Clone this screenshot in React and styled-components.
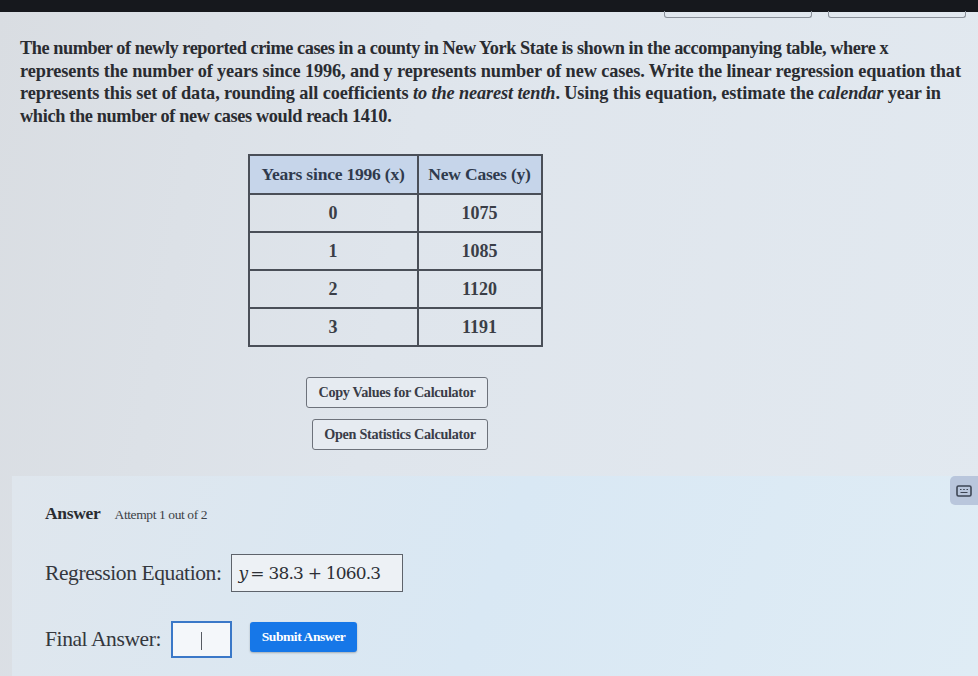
import React from 'react'
import styled, { createGlobalStyle } from 'styled-components'

const Global = createGlobalStyle`
  html, body { margin: 0; padding: 0; }
  body {
    width: 978px;
    height: 676px;
    overflow: hidden;
    background: linear-gradient(100deg, #d9dde2 0%, #dfe5ec 40%, #e2e9f0 100%);
    font-family: "Liberation Serif", "DejaVu Serif", serif;
    color: #23262b;
  }
`

const Page = styled.div`
  width: 978px;
  height: 676px;
  display: flex;
  flex-direction: column;
`

const TopBar = styled.div`
  height: 12px;
  background: #16181d;
  display: flex;
  justify-content: flex-end;
  align-items: flex-end;
  gap: 16px;
  padding-right: 12px;
`

const Tab = styled.div`
  width: ${p => p.w}px;
  height: 6px;
  margin-bottom: -6px;
  border: 1px solid #8a9099;
  border-top: none;
  border-radius: 0 0 3px 3px;
`

const Question = styled.div`
  margin: 25px 0 0 20px;
  width: 950px;
  font-size: 18.3px;
  line-height: 22.6px;
  font-weight: 700;
  letter-spacing: -0.35px;
  color: #2a2c31;
  em { font-weight: 700; }
`

const Line = styled.div`
  white-space: nowrap;
  letter-spacing: ${p => p.ls || -0.35}px;
`

const Center = styled.div`
  margin: 27px 0 0 247px;
  width: 296px;
  display: flex;
  flex-direction: column;
  align-items: center;
`

const Table = styled.table`
  border-collapse: collapse;
  width: 295px;
  font-family: "Liberation Serif", "DejaVu Serif", serif;
  color: #3a3d44;
`

const Th = styled.th`
  background: #c6d5ea;
  border: 2px solid #4a4f58;
  height: 37px;
  padding: 0 4px;
  font-size: 17.5px;
  font-weight: 700;
  letter-spacing: -0.2px;
  white-space: nowrap;
  color: #2f3a4d;
`

const Td = styled.td`
  border: 2px solid #4a4f58;
  height: 34px;
  text-align: center;
  font-size: 18px;
  font-weight: 700;
  color: #3a3e47;
`

const ToolButton = styled.button`
  font-family: "Liberation Serif", serif;
  font-weight: 700;
  font-size: 14.2px;
  letter-spacing: -0.3px;
  color: #3a3d48;
  background: #e6ebf1;
  border: 1.5px solid #6d727b;
  border-radius: 3px;
  height: 31px;
  padding: 0 11px;
  margin-top: ${p => p.top}px;
  margin-left: ${p => p.shift || 0}px;
`

const AnswerPanel = styled.div`
  margin: 26px 0 0 12px;
  flex: 1;
  background: linear-gradient(110deg, #dfe6ed 0%, #d9e8f4 50%, #dfecf5 100%);
  padding: 0 0 0 33px;
  display: flex;
  flex-direction: column;
`

const AnswerHead = styled.div`
  display: flex;
  align-items: baseline;
  justify-content: space-between;
`

const Title = styled.div`
  margin-top: 27px;
  display: flex;
  align-items: baseline;
  gap: 14px;
`

const AnswerLabel = styled.span`
  font-weight: 700;
  font-size: 17.5px;
  letter-spacing: -0.3px;
  color: #2a2c31;
`

const Attempt = styled.span`
  font-size: 13.5px;
  letter-spacing: -0.4px;
  color: #3c3f46;
`

const KeyButton = styled.div`
  align-self: flex-start;
  margin-top: 0;
  width: 28px;
  height: 29px;
  border-radius: 5px 0 0 5px;
  background: #b9c6dc;
  display: flex;
  align-items: center;
  justify-content: center;
`

const Row = styled.div`
  display: flex;
  align-items: center;
  margin-top: ${p => p.top}px;
`

const Label = styled.span`
  font-size: 21.5px;
  letter-spacing: -0.4px;
  color: #34373d;
  margin-right: ${p => p.gap}px;
`

const EqBox = styled.div`
  width: 172px;
  height: 38px;
  border: 1.5px solid #5e636b;
  background: #edf1f5;
  display: flex;
  align-items: center;
  padding-left: 7px;
  box-sizing: border-box;
  font-family: "DejaVu Serif", serif;
  font-size: 17px;
  letter-spacing: -0.8px;
  color: #2c2f35;
  i { margin-right: 3px; }
`

const AnswerInput = styled.div`
  width: 61px;
  height: 37px;
  box-sizing: border-box;
  border: 2px solid #3a78c8;
  background: #f4f7fa;
  position: relative;
`

const Caret = styled.div`
  position: absolute;
  left: 28px;
  top: 9px;
  width: 1px;
  height: 18px;
  background: #555a62;
`

const Submit = styled.button`
  margin-left: 18px;
  margin-top: -6px;
  height: 30px;
  width: 107px;
  border: none;
  border-radius: 3px;
  background: #1677e8;
  color: #fff;
  font-family: "Liberation Serif", serif;
  font-weight: 700;
  font-size: 13.5px;
  letter-spacing: -0.4px;
  box-shadow: 0 1px 2px rgba(0,0,0,0.25);
`

const rows = [
  [0, 1075],
  [1, 1085],
  [2, 1120],
  [3, 1191],
]

export default function App() {
  return (
    <>
      <Global />
      <Page>
        <TopBar>
          <Tab w={146} />
          <Tab w={136} />
        </TopBar>
        <Question>
          <Line ls={-0.45}>The number of newly reported crime cases in a county in New York State is shown in the accompanying table, where x</Line>
          <Line ls={-0.12}>represents the number of years since 1996, and y represents number of new cases. Write the linear regression equation that</Line>
          <Line ls={-0.12}>represents this set of data, rounding all coefficients <em>to the nearest tenth</em>. Using this equation, estimate the <em>calendar</em> year in</Line>
          <Line>which the number of new cases would reach 1410.</Line>
        </Question>
        <Center>
          <Table>
            <thead>
              <tr>
                <Th>Years since 1996 (x)</Th>
                <Th>New Cases (y)</Th>
              </tr>
            </thead>
            <tbody>
              {rows.map(([x, y]) => (
                <tr key={x}>
                  <Td>{x}</Td>
                  <Td>{y}</Td>
                </tr>
              ))}
            </tbody>
          </Table>
          <ToolButton top={30} shift={4}>Copy Values for Calculator</ToolButton>
          <ToolButton top={11} shift={10}>Open Statistics Calculator</ToolButton>
        </Center>
        <AnswerPanel>
          <AnswerHead>
            <Title>
              <AnswerLabel>Answer</AnswerLabel>
              <Attempt>Attempt 1 out of 2</Attempt>
            </Title>
            <KeyButton>
              <svg width="16" height="12" viewBox="0 0 16 12">
                <rect x="1" y="1" width="14" height="10" rx="1.5" fill="none" stroke="#3d4554" strokeWidth="1.6" />
                <path d="M4 4.5h1.5M7.2 4.5h1.6M10.5 4.5H12M4.5 7.5h7" stroke="#3d4554" strokeWidth="1.2" />
              </svg>
            </KeyButton>
          </AnswerHead>
          <Row top={30}>
            <Label gap={9}>Regression Equation:</Label>
            <EqBox><i>y</i>= 38.3 + 1060.3</EqBox>
          </Row>
          <Row top={29}>
            <Label gap={10}>Final Answer:</Label>
            <AnswerInput><Caret /></AnswerInput>
            <Submit>Submit Answer</Submit>
          </Row>
        </AnswerPanel>
      </Page>
    </>
  )
}
